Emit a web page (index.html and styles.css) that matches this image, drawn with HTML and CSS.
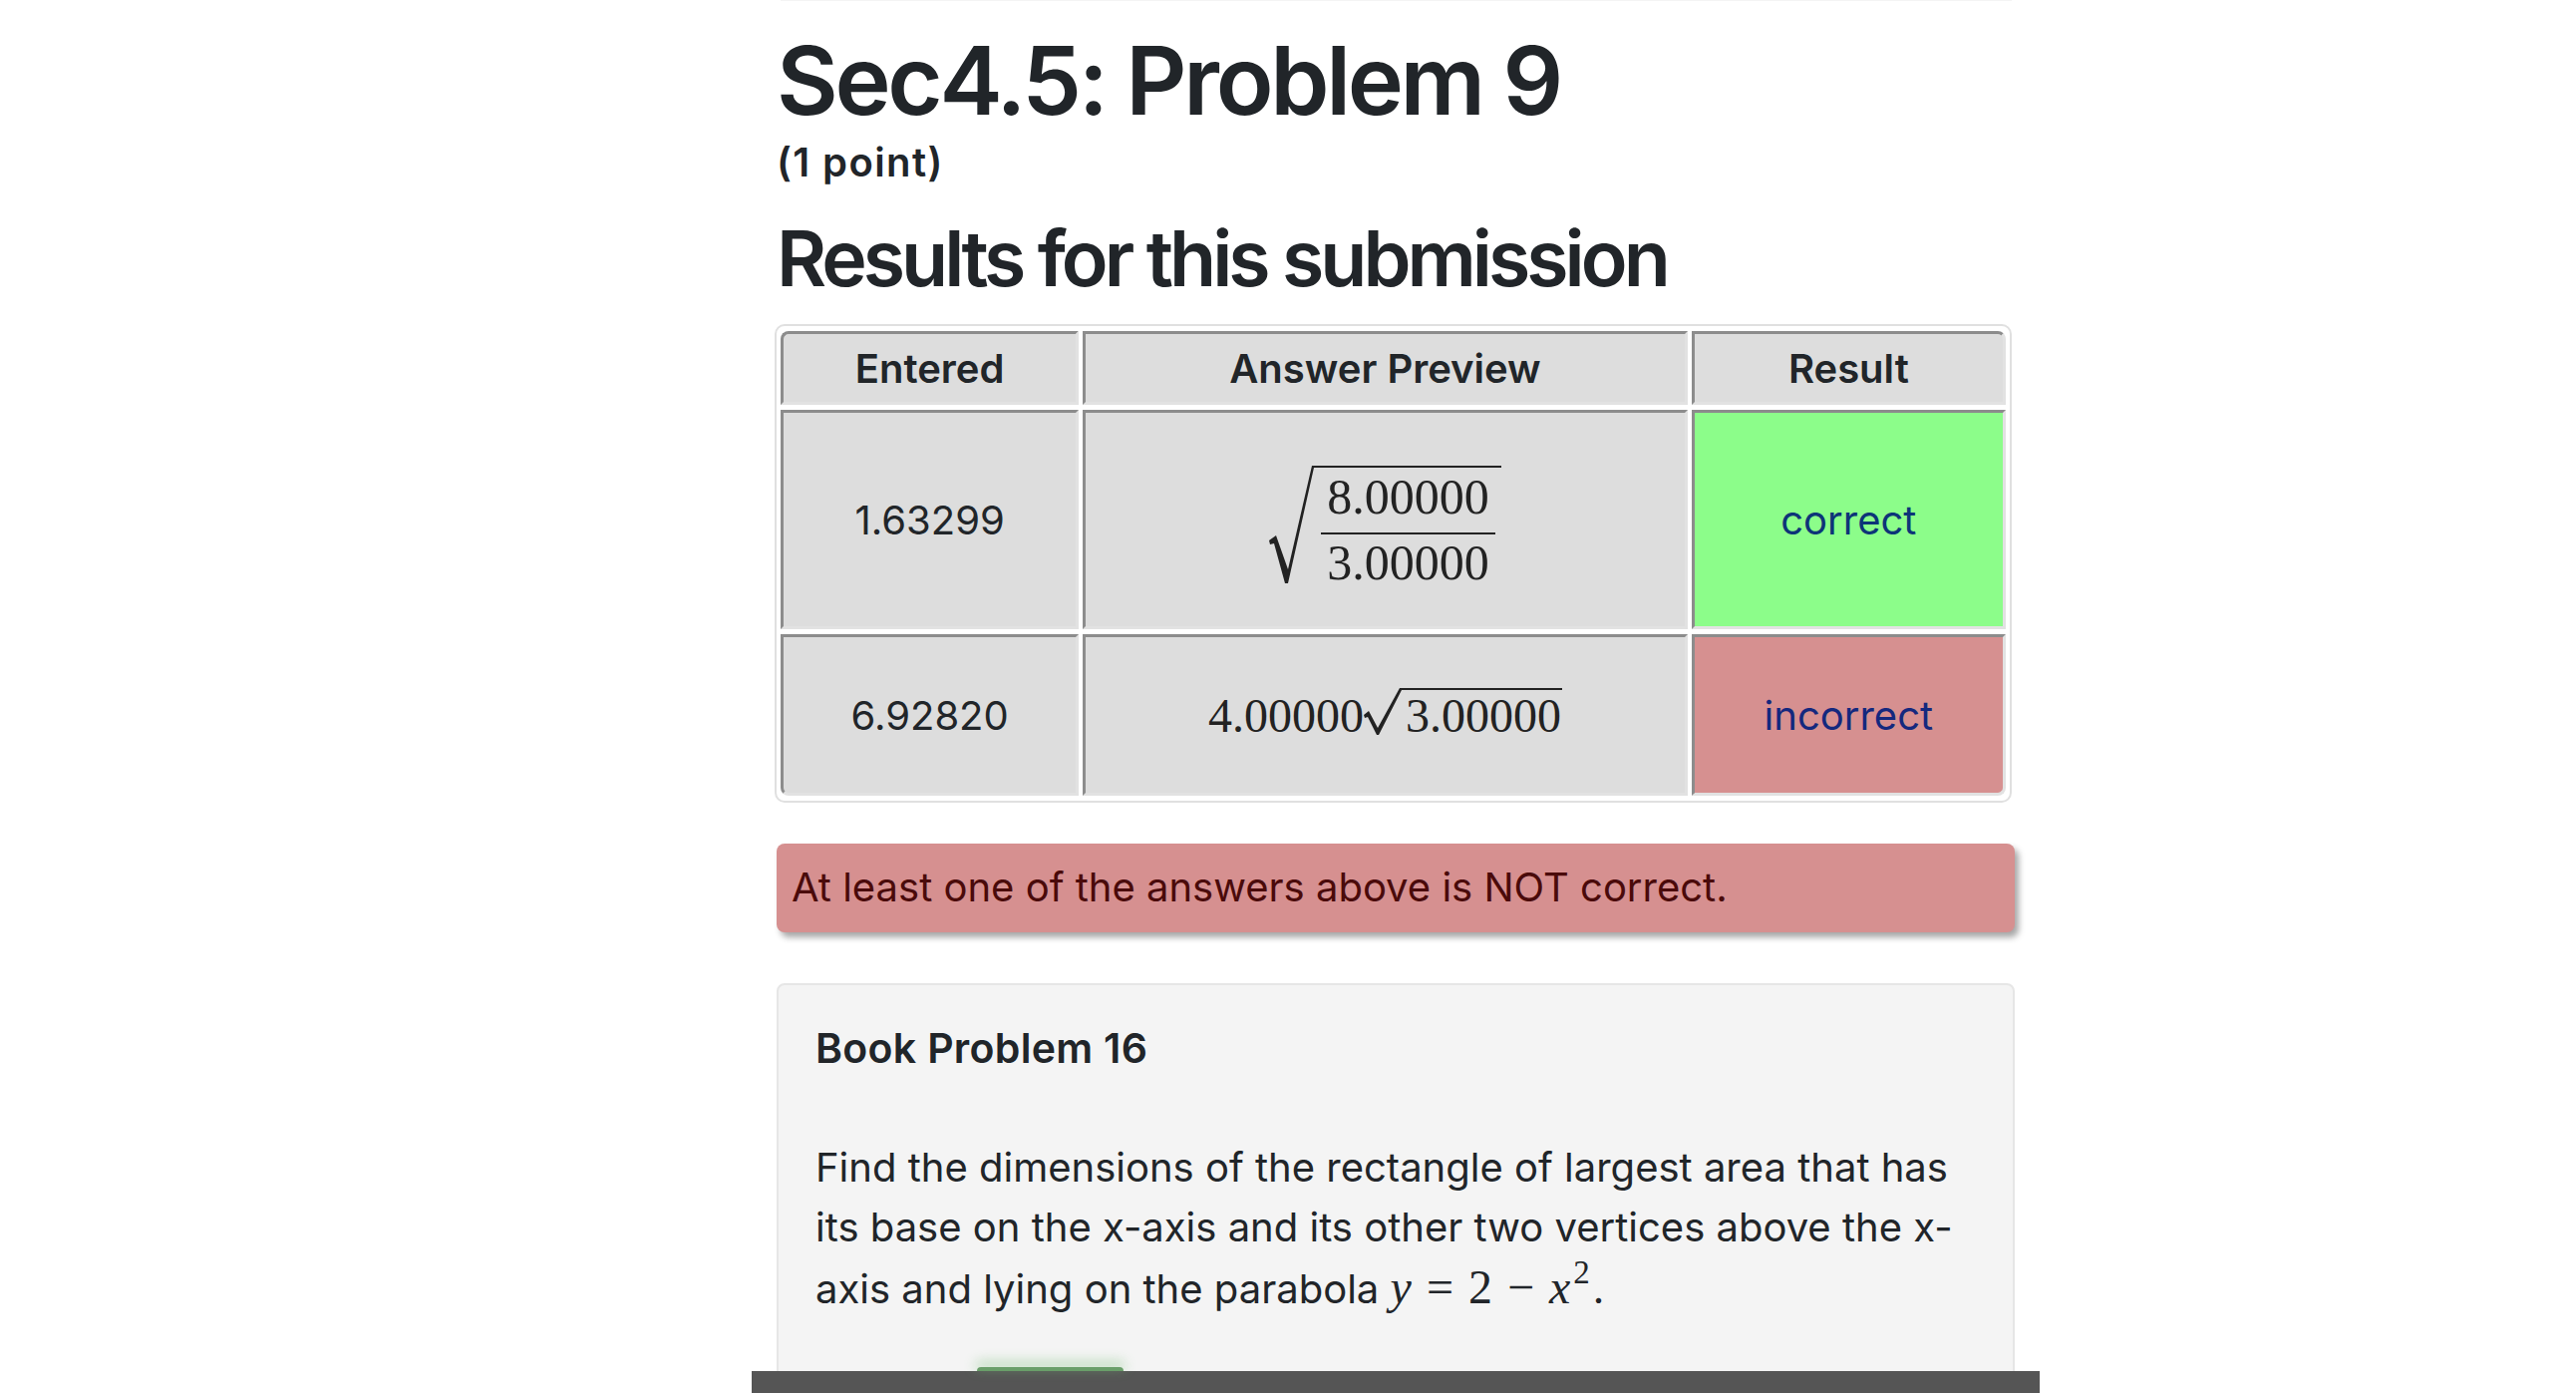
FILE: index.html
```html
<!DOCTYPE html>
<html lang="en">
<head>
<meta charset="utf-8">
<title>Sec4.5: Problem 9</title>
<link rel="stylesheet" href="styles.css">
</head>
<body>
<div class="page">
  <div class="topline"></div>
  <h1 class="title">Sec4.5: Problem 9</h1>
  <div class="points">(1 point)</div>
  <h2 class="results-title">Results for this submission</h2>
  <div class="table-wrap">
    <table class="results">
      <colgroup><col class="c1"><col class="c2"><col class="c3"></colgroup>
      <thead>
        <tr class="head-row"><th>Entered</th><th>Answer Preview</th><th>Result</th></tr>
      </thead>
      <tbody>
        <tr class="row1">
          <td>1.63299</td>
          <td>
            <span class="m big">
              <svg class="rad-b" viewBox="0 0 45 118" width="45" height="118"><polygon points="0,75 7,70 19,104 43,0 45,0 45,2 19,118 16,118 5,78 1,79" fill="#222"/></svg>
              <span class="radicand">
                <span class="frac">
                  <span class="num">8.00000</span>
                  <span class="den">3.00000</span>
                </span>
              </span>
            </span>
          </td>
          <td class="ok">correct</td>
        </tr>
        <tr class="row2">
          <td>6.92820</td>
          <td><span class="m">4.00000<svg class="rad-s" viewBox="0 0 38 47" width="38" height="47"><polygon points="0,27 5,23 14,40 36,0 38,0 38,2 15,47 13,47 4,29 1,30" fill="#222"/></svg><span class="ov">3.00000</span></span></td>
          <td class="bad">incorrect</td>
        </tr>
      </tbody>
    </table>
  </div>
  <div class="alert">At least one of the answers above is NOT correct.</div>
  <div class="card">
    <div class="card-title">Book Problem 16</div>
    <p class="problem">Find the dimensions of the rectangle of largest area that has its base on the x-axis and its other two vertices above the x-axis and lying on the parabola <span class="im"><i>y</i><span class="op">=</span>2<span class="op">−</span><i>x</i><sup>2</sup></span>.</p>
  </div>
</div>
<div class="bottom-bar"><div class="submit-peek"></div></div>
</body>
</html>
```
FILE: styles.css
```css
html, body {
  margin: 0;
  background: #ffffff;
}
body {
  font-family: Inter, "Noto Sans", "Liberation Sans", sans-serif;
  color: #212529;
  overflow: hidden;
}
.page {
  margin-left: 779px;
  width: 1242px;
}
.topline {
  height: 0;
  border-top: 1px solid #f4f4f4;
  margin-left: 4px;
  width: 1235px;
}
.title {
  margin: 23px 0 0;
  font-size: 95px;
  line-height: 114px;
  font-weight: 600;
  letter-spacing: -3.3px;
}
.points {
  margin-top: 3px;
  font-size: 40px;
  line-height: 44px;
  font-weight: 600;
  letter-spacing: 1.4px;
}
.results-title {
  margin: 28px 0 0;
  font-size: 77px;
  line-height: 92px;
  font-weight: 600;
  letter-spacing: -4px;
}
.table-wrap {
  margin-top: 20px;
  margin-left: -2px;
  width: 1241px;
  box-sizing: border-box;
  border: 2px solid #e0e0e0;
  border-radius: 10px;
}
.results {
  width: 100%;
  table-layout: fixed;
  border-collapse: separate;
  border-spacing: 4px 5px;
}
.c1 { width: 299px; }
.c2 { width: 606px; }
.c3 { width: 315px; }
.results th, .results td {
  background: #dddddd;
  border-style: solid;
  border-width: 3px;
  border-color: #8c8c8c #e2e2e2 #e2e2e2 #8c8c8c;
  text-align: center;
  vertical-align: middle;
  padding: 0;
  font-size: 40px;
}
.results th {
  font-weight: 600;
}
.results td {
  font-weight: 400;
}
.head-row { height: 74px; }
.row1 { height: 220px; }
.row2 { height: 162px; }
.head-row th:first-child { border-top-left-radius: 8px; }
.head-row th:last-child { border-top-right-radius: 8px; }
.row2 td:first-child { border-bottom-left-radius: 8px; }
.row2 td:last-child { border-bottom-right-radius: 8px; }
.results td.ok {
  background: #8cfd8a;
  color: #0d3478;
}
.results td.bad {
  background: #d69090;
  color: #14287e;
}
.m {
  font-family: "Liberation Serif", "DejaVu Serif", serif;
  font-size: 48px;
  line-height: 48px;
  color: #222;
}
.m.big {
  display: inline-flex;
  align-items: flex-start;
  vertical-align: middle;
  margin-top: 14px;
  font-size: 50px;
}
.rad-b { display: block; }
.radicand {
  display: block;
  border-top: 2px solid #222;
  padding: 0 6px 0 7px;
}
.frac {
  display: flex;
  flex-direction: column;
  align-items: stretch;
  text-align: center;
}
.num {
  padding: 5px 6px 12px;
  border-bottom: 2px solid #222;
}
.den {
  padding-top: 4px;
  padding-bottom: 2px;
}
.rad-s {
  vertical-align: -3px;
}
.ov {
  display: inline-block;
  border-top: 2px solid #222;
  padding: 2px 1px 0 4px;
}
.alert {
  margin-top: 41px;
  background: #d69090;
  color: #4a0a0a;
  border-radius: 8px;
  padding: 20px 15px 21px;
  font-size: 40px;
  line-height: 48px;
  box-shadow: 4px 5px 6px rgba(0, 0, 0, 0.35);
}
.card {
  margin-top: 51px;
  background: #f4f4f4;
  border: 2px solid #e6e6e6;
  border-radius: 8px;
  padding: 39px 37px 90px;
}
.card-title {
  font-size: 41px;
  line-height: 48px;
  font-weight: 600;
  letter-spacing: 0.3px;
}
.problem {
  margin: 66px 0 0;
  font-size: 40px;
  line-height: 60px;
  letter-spacing: 0;
}
.im {
  font-family: "Liberation Serif", "DejaVu Serif", serif;
  font-size: 48px;
  letter-spacing: 0;
}
.im i { font-style: italic; }
.im .op { margin: 0 15px; }
.im sup {
  font-size: 33px;
  line-height: 0;
  vertical-align: 20px;
  margin-left: 3px;
  margin-right: 3px;
}
.bottom-bar {
  position: fixed;
  left: 754px;
  bottom: 0;
  width: 1292px;
  height: 22px;
  background: #555555;
}
.submit-peek {
  position: absolute;
  left: 226px;
  top: -4px;
  width: 147px;
  height: 4px;
  background: #6a9f6a;
  border-radius: 6px 6px 0 0;
  box-shadow: 0 -4px 12px 2px rgba(120, 190, 120, 0.45);
}
```
